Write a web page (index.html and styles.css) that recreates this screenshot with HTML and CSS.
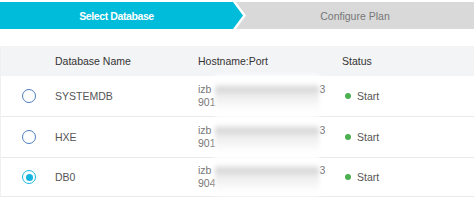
FILE: index.html
```html
<!DOCTYPE html>
<html>
  <head>
    <link rel="stylesheet" href="styles.css">
  </head>
  <body>
    <div class="steps">
      <div class="step-wrap">
        <div class="step step-active">Select Database</div>
      </div>
      <div class="step step-next">Configure Plan</div>
    </div>

    <div class="db-table">
      <div class="row head">
        <div class="cell"></div>
        <div class="cell">Database Name</div>
        <div class="cell">Hostname:Port</div>
        <div class="cell">Status</div>
      </div>
      <div class="row">
        <div class="cell"><span class="radio"></span></div>
        <div class="cell">SYSTEMDB</div>
        <div class="cell host">izb<span class="hide"></span>3<br>901<span class="mask"></span></div>
        <div class="cell"><span class="dot"></span>Start</div>
      </div>
      <div class="row">
        <div class="cell"><span class="radio"></span></div>
        <div class="cell">HXE</div>
        <div class="cell host">izb<span class="hide"></span>3<br>901<span class="mask"></span></div>
        <div class="cell"><span class="dot"></span>Start</div>
      </div>
      <div class="row">
        <div class="cell"><span class="radio checked"></span></div>
        <div class="cell">DB0</div>
        <div class="cell host">izb<span class="hide"></span>3<br>904<span class="mask"></span></div>
        <div class="cell"><span class="dot"></span>Start</div>
      </div>
    </div>
  </body>
</html>
```

FILE: styles.css
```css
*{
    margin:0;
    padding:0;
    box-sizing:border-box;
}
body{
    width:474px;
    height:201px;
    overflow:hidden;
    background:#fff;
    font-family:"Liberation Sans", Arial, sans-serif;
    font-size:10.5px;
    color:#555;
}

/* step bar */
.steps{
    display:flex;
    margin-top:2px;
    height:27px;
    background:#d9d9d9;
}
.step-wrap{
    width:246px;
    flex:none;
    background:#fff;
    clip-path:polygon(0 0, 236px 0, 246px 50%, 236px 100%, 0 100%);
}
.step{
    height:27px;
    display:flex;
    align-items:center;
    justify-content:center;
    font-size:10.5px;
}
.step-active{
    width:243px;
    padding-right:10px;
    background:#00bcdb;
    color:#fff;
    font-weight:bold;
    letter-spacing:-0.4px;
    clip-path:polygon(0 0, 233px 0, 243px 50%, 233px 100%, 0 100%);
}
.step-next{
    flex:1;
    color:#777;
    padding-right:10px;
}

/* table */
.db-table{
    margin-top:17px;
    border-left:1px solid #f0f0f0;
}
.row{
    display:grid;
    grid-template-columns:54px 143px 144px 1fr;
    height:41px;
    border-bottom:1px solid #eaeaea;
}
.row.head{
    height:30px;
    background:#f3f4f6;
    border-bottom:none;
    color:#333;
}
.row:last-child{
    height:39px;
}
.cell{
    display:flex;
    align-items:center;
}
.host{
    display:block;
    position:relative;
    align-self:center;
    line-height:13px;
    color:#777;
    white-space:nowrap;
}
.hide{
    display:inline-block;
    width:108px;
}
.mask{
    position:absolute;
    left:17px;
    top:-8px;
    width:104px;
    height:40px;
    background:linear-gradient(#fff 0, #fff 8px, #e3e3e3 12px, #d6d6d6 15px, #ececec 20px, #f6f6f6 28px, #fff 36px);
    filter:blur(2px);
}

.radio{
    width:14px;
    height:14px;
    margin-left:21px;
    border:1.5px solid #4d7dbf;
    border-radius:50%;
    display:flex;
    align-items:center;
    justify-content:center;
}
.radio.checked{
    border-color:#1cb8e2;
}
.radio.checked::after{
    content:"";
    width:7px;
    height:7px;
    border-radius:50%;
    background:#14b4e0;
}
.dot{
    width:6px;
    height:6px;
    border-radius:50%;
    background:#4caf50;
    margin:0 6px 0 3px;
}
```
